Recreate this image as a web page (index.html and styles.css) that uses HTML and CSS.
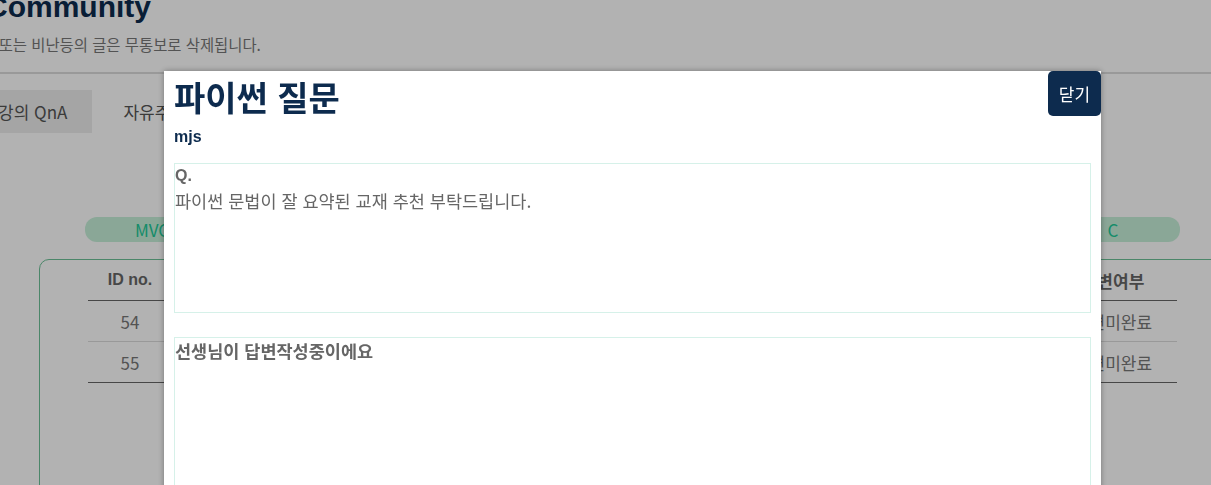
FILE: index.html
```html
<!DOCTYPE html>
<html lang="ko">
<head>
<meta charset="utf-8">
<title>Community</title>
<link rel="stylesheet" href="styles.css">
</head>
<body>
<div class="page">
  <h1 class="page-title">Community</h1>
  <p class="page-sub">비방 또는 비난등의 글은 무통보로 삭제됩니다.</p>
  <div class="divider"></div>
  <nav class="tabs">
    <span class="tab active">강의 QnA</span>
    <span class="tab">자유주제</span>
  </nav>
  <div class="pills">
    <span class="pill">MVC</span>
    <span class="pill">Java</span>
    <span class="pill">Python</span>
    <span class="pill">JSP</span>
    <span class="pill">Spring</span>
    <span class="pill">DB</span>
    <span class="pill">C</span>
  </div>
  <div class="board">
    <table class="list">
      <thead>
        <tr><th class="c-id">ID no.</th><th>제목</th><th class="c-w">작성자</th><th class="c-d">작성일</th><th class="c-s">답변여부</th></tr>
      </thead>
      <tbody>
        <tr><td class="c-id">54</td><td>파이썬 질문</td><td class="c-w">mjs</td><td class="c-d">2023-05-10</td><td class="c-s">답변미완료</td></tr>
        <tr><td class="c-id">55</td><td>자바 질문</td><td class="c-w">mjs</td><td class="c-d">2023-05-11</td><td class="c-s">답변미완료</td></tr>
      </tbody>
    </table>
  </div>
</div>

<div class="overlay">
  <section class="modal">
    <header class="modal-head">
      <h2 class="modal-title">파이썬 질문</h2>
      <button class="close-btn" type="button">닫기</button>
    </header>
    <p class="author">mjs</p>
    <div class="qbox">
      <div class="q-label">Q.</div>
      <div class="q-text">파이썬 문법이 잘 요약된 교재 추천 부탁드립니다.</div>
    </div>
    <div class="abox">
      <div class="a-text">선생님이 답변작성중이에요</div>
    </div>
  </section>
</div>
</body>
</html>
```

FILE: styles.css
```css
html, body {
  margin: 0;
  height: 485px;
  overflow: hidden;
  background: #ffffff;
}
body {
  font-family: "Liberation Sans", "Noto Sans CJK KR", sans-serif;
}
.page {
  margin-top: -11px;
}
.page-title {
  margin: 0 0 0 -14px;
  font-size: 30px;
  line-height: 36px;
  font-weight: 700;
  color: #0d2b4e;
}
.page-sub {
  margin: 9px 0 0 -34px;
  font-size: 15.4px;
  line-height: 20px;
  color: #777777;
  font-family: "Noto Sans CJK KR", sans-serif;
}
.divider {
  margin-top: 18px;
  height: 2px;
  background: #dcdcdc;
}
.tabs {
  display: flex;
  gap: 6px;
  margin: 16px 0 0 -27px;
}
.tab {
  height: 43px;
  line-height: 43px;
  padding: 0 25px;
  font-size: 17px;
  color: #555555;
  font-family: "Noto Sans CJK KR", sans-serif;
}
.tab.active {
  background: #ececec;
}
.pills {
  display: flex;
  justify-content: space-between;
  margin: 84px 31px 0 85px;
}
.pill {
  width: 134px;
  height: 25px;
  line-height: 25px;
  text-align: center;
  border-radius: 12px;
  background: #c6efd9;
  color: #20c997;
  font-size: 17px;
  font-family: "Noto Sans CJK KR", sans-serif;
}
.board {
  margin: 17px -30px 0 39px;
  height: 400px;
  border: 1px solid #6cc197;
  border-radius: 10px 10px 0 0;
  padding-left: 48px;
}
.list {
  width: 1089px;
  border-collapse: collapse;
  font-size: 17px;
  font-family: "Noto Sans CJK KR", sans-serif;
}
.list th {
  height: 40px;
  padding: 0;
  font-family: "Liberation Sans", "Noto Sans CJK KR", sans-serif;
  font-size: 16px;
  font-weight: 700;
  color: #666666;
  border-bottom: 1px solid #666666;
}
.list th.c-s {
  font-size: 17px;
  padding-left: 6px;
}
.list td {
  height: 40px;
  padding: 0;
  text-align: center;
  color: #777777;
  border-bottom: 1px solid #dcdcdc;
}
.list td.c-s {
  padding-left: 6px;
}
.list tbody tr:last-child td {
  border-bottom: 1px solid #666666;
}
.c-id { width: 84px; }
.c-w { width: 120px; }
.c-d { width: 150px; }
.c-s { width: 128px; }

.overlay {
  position: fixed;
  inset: 0;
  background: rgba(0, 0, 0, 0.3);
}
.modal {
  position: absolute;
  left: 164px;
  top: 71px;
  width: 937px;
  height: 600px;
  box-sizing: border-box;
  padding: 0 10px 10px;
  background: #ffffff;
  box-shadow: 0 0 6px rgba(0, 0, 0, 0.35);
}
.modal-head {
  display: flex;
  justify-content: space-between;
  align-items: flex-start;
}
.modal-title {
  margin: 8px 0 0;
  font-size: 34px;
  line-height: 40px;
  font-weight: 700;
  color: #0d2b4e;
  font-family: "Liberation Sans", "Noto Sans CJK KR", sans-serif;
}
.close-btn {
  margin-right: -10px;
  width: 53px;
  height: 45px;
  border: none;
  border-radius: 5px;
  background: #0d2b4e;
  color: #ffffff;
  font-size: 17px;
  font-family: "Liberation Sans", "Noto Sans CJK KR", sans-serif;
  padding: 0;
}
.author {
  margin: 8px 0 0;
  font-size: 16px;
  line-height: 20px;
  font-weight: 700;
  color: #0d2b4e;
}
.qbox, .abox {
  border: 1px solid #d6f1e9;
  line-height: 24px;
  color: #666666;
}
.qbox {
  margin-top: 16px;
  height: 150px;
  box-sizing: border-box;
}
.abox {
  margin-top: 24px;
  height: 300px;
  box-sizing: border-box;
}
.q-label {
  font-size: 16px;
  font-weight: 700;
}
.q-text {
  font-size: 17.5px;
  font-family: "Noto Sans CJK KR", sans-serif;
  padding-top: 1px;
}
.a-text {
  font-size: 17.5px;
  font-weight: 700;
  padding-top: 1px;
  font-family: "Noto Sans CJK KR", sans-serif;
}
```
